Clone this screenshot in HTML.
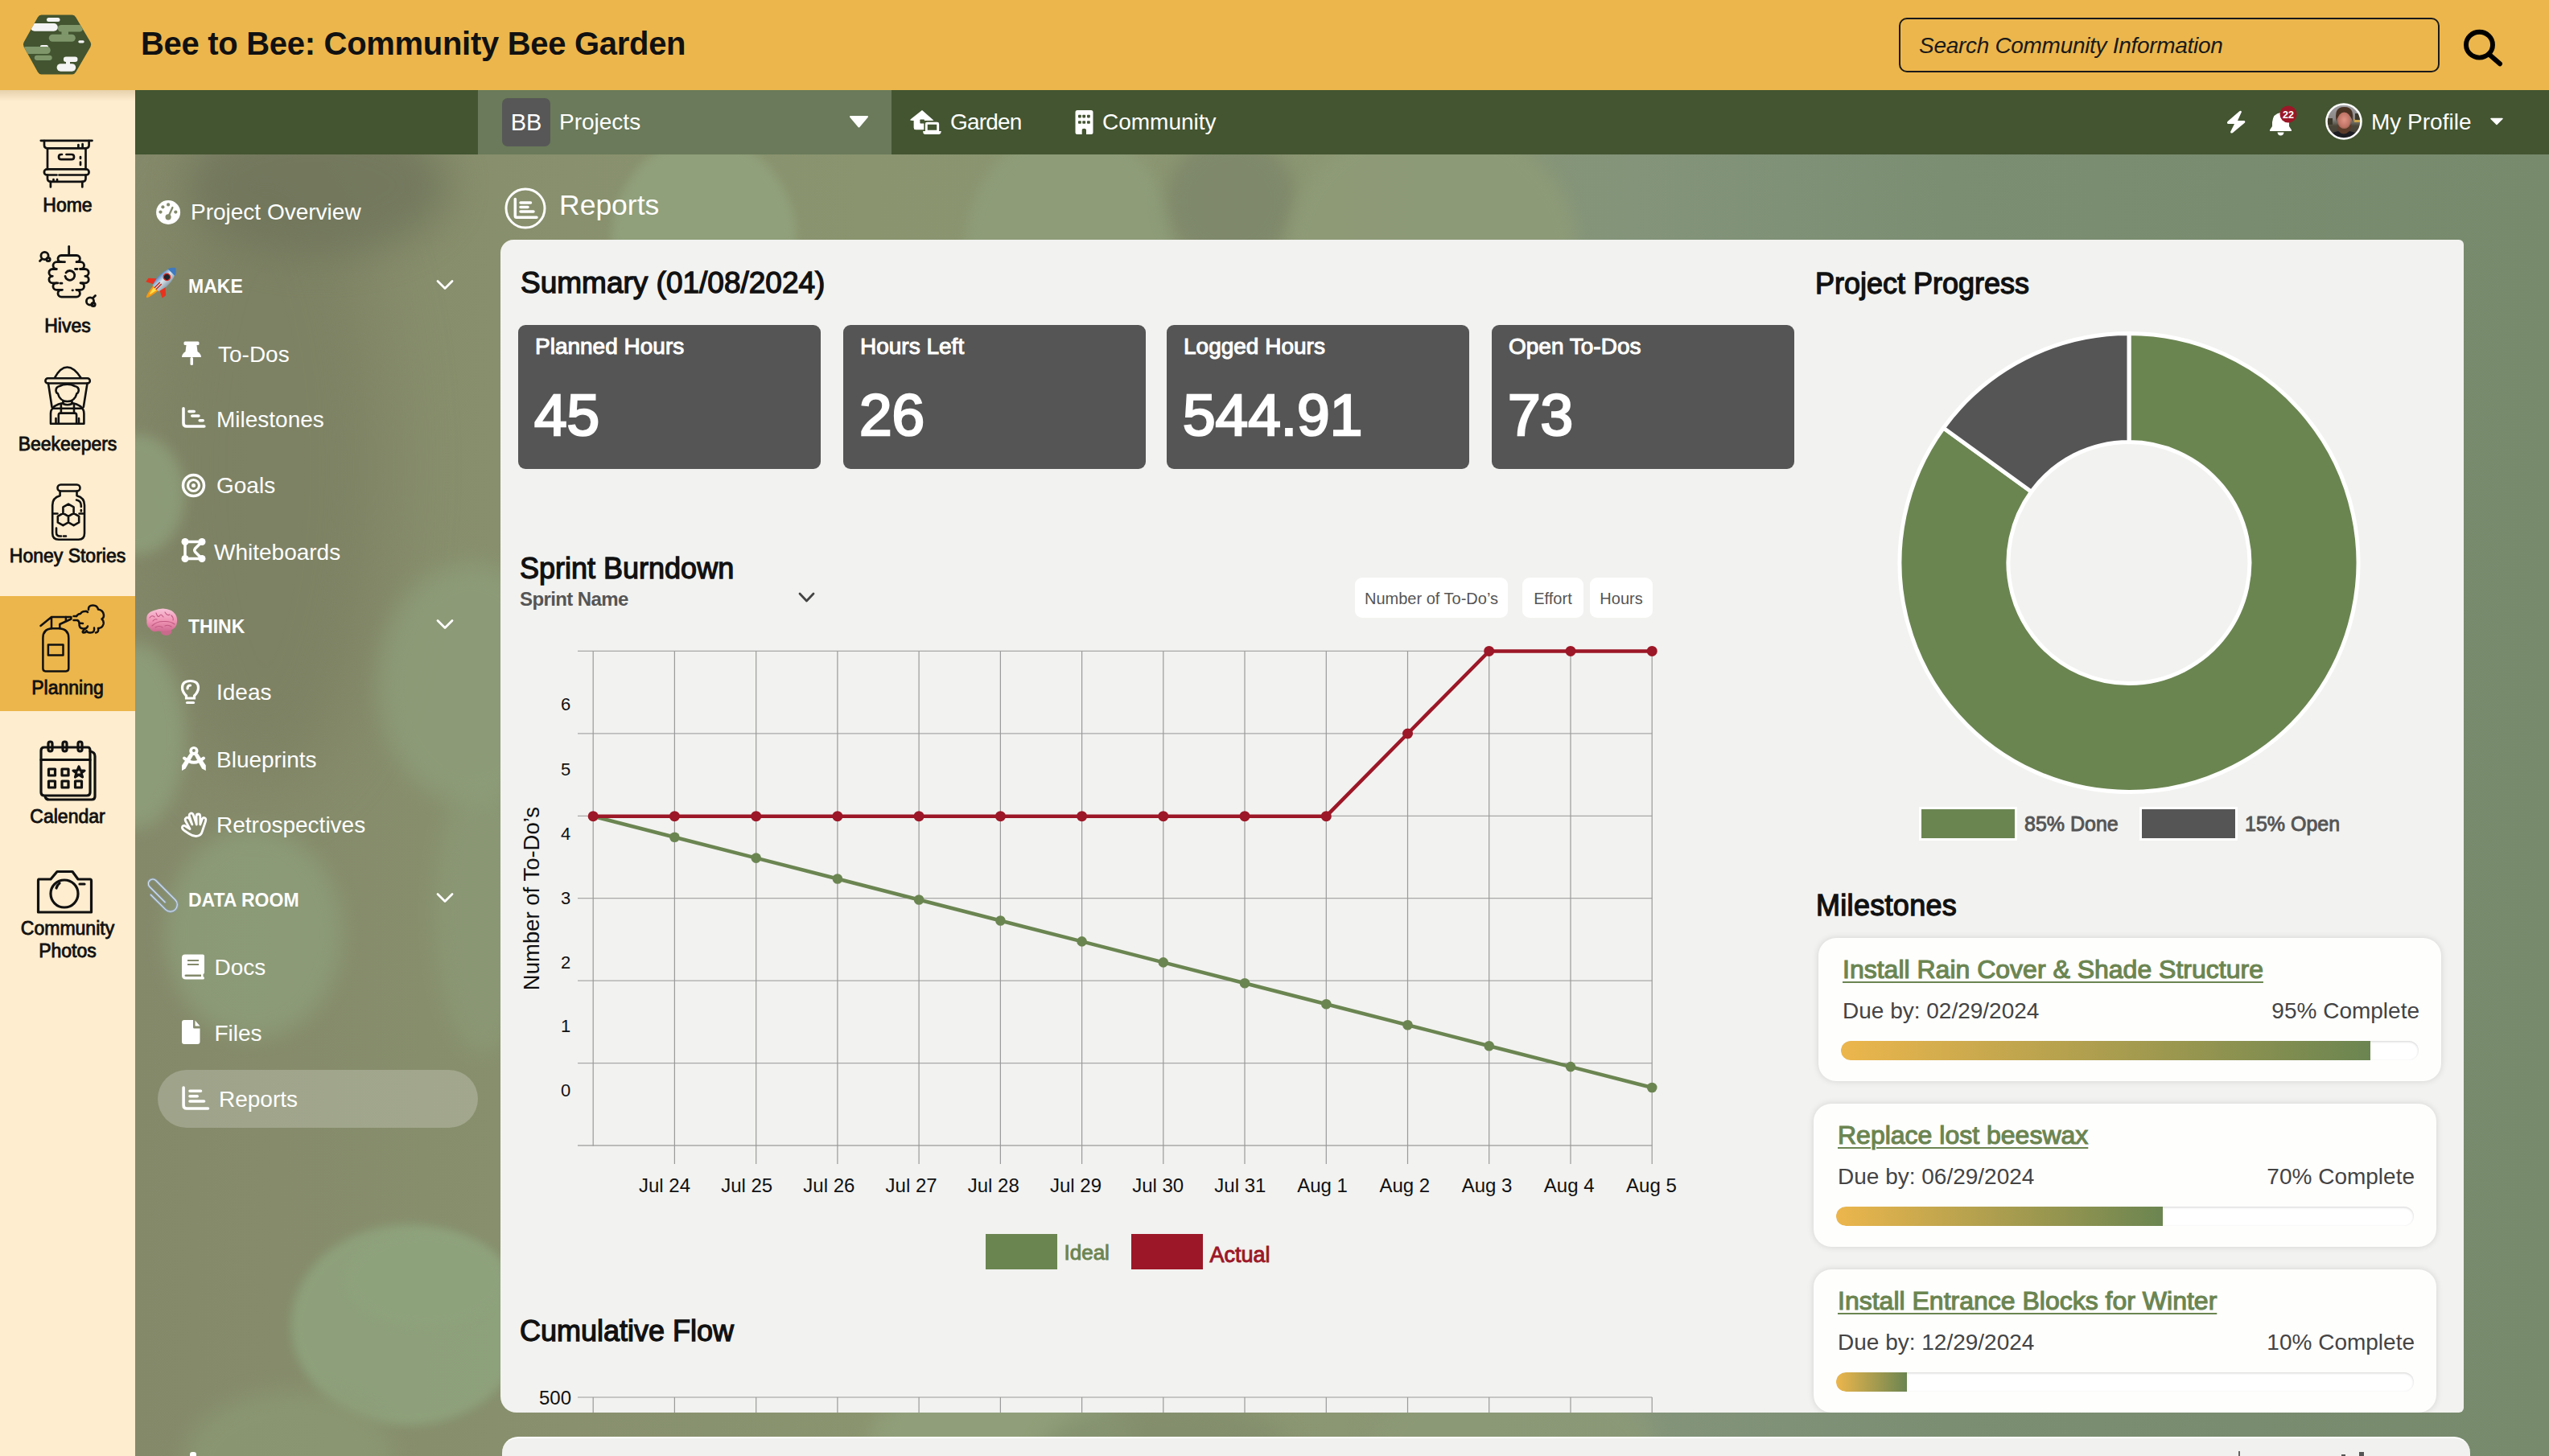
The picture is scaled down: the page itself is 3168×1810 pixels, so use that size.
<!DOCTYPE html><html><head><meta charset="utf-8"><style>
html,body{margin:0;padding:0;}
body{width:3168px;height:1810px;overflow:hidden;position:relative;font-family:"Liberation Sans",sans-serif;background:#7d8a68;}
.t{position:absolute;line-height:1;white-space:nowrap;}
.a{position:absolute;}
svg{position:absolute;overflow:visible;}
</style></head><body>

<div class="a" style="left:168px;top:192px;width:3000px;height:1618px;overflow:hidden;background:linear-gradient(90deg,#84896a 0%,#878e6c 12%,#8a946f 30%,#8b9672 50%,#83947a 62%,#7b8e72 75%,#778a6c 100%);"><div class="a" style="left:12px;top:-12px;width:300px;height:800px;border-radius:50%;background:#7b7f62;filter:blur(45px);opacity:0.75"></div><div class="a" style="left:62px;top:-52px;width:330px;height:180px;border-radius:50%;background:#70755b;filter:blur(25px);opacity:0.8"></div><div class="a" style="left:-58px;top:348px;width:120px;height:150px;border-radius:50%;background:#8fa07c;filter:blur(8px);opacity:0.8"></div><div class="a" style="left:-58px;top:608px;width:120px;height:230px;border-radius:50%;background:#8fa07c;filter:blur(10px);opacity:0.8"></div><div class="a" style="left:37px;top:838px;width:220px;height:260px;border-radius:50%;background:#8e9f7b;filter:blur(12px);opacity:0.75"></div><div class="a" style="left:302px;top:508px;width:230px;height:300px;border-radius:50%;background:#8fa07c;filter:blur(14px);opacity:0.7"></div><div class="a" style="left:372px;top:768px;width:120px;height:350px;border-radius:50%;background:#8d9d79;filter:blur(14px);opacity:0.6"></div><div class="a" style="left:194px;top:1330px;width:290px;height:250px;border-radius:50%;background:#8ea27c;filter:blur(6px);opacity:0.95"></div><div class="a" style="left:262px;top:1338px;width:200px;height:120px;border-radius:50%;background:#8ea27c;filter:blur(6px);opacity:0.9"></div><div class="a" style="left:62px;top:1538px;width:260px;height:160px;border-radius:50%;background:#8c9a74;filter:blur(14px);opacity:0.7"></div><div class="a" style="left:592px;top:-22px;width:230px;height:260px;border-radius:50%;background:#91a27c;filter:blur(6px);opacity:0.9"></div><div class="a" style="left:1032px;top:-32px;width:260px;height:300px;border-radius:50%;background:#8f9e7a;filter:blur(8px);opacity:0.85"></div><div class="a" style="left:1282px;top:-22px;width:160px;height:160px;border-radius:50%;background:#7b8469;filter:blur(12px);opacity:0.75"></div><div class="a" style="left:1432px;top:-42px;width:360px;height:320px;border-radius:50%;background:#8f9c78;filter:blur(10px);opacity:0.8"></div><div class="a" style="left:912px;top:1508px;width:330px;height:200px;border-radius:50%;background:#92a27c;filter:blur(14px);opacity:0.8"></div><div class="a" style="left:1122px;top:1548px;width:320px;height:150px;border-radius:50%;background:#7f8a6a;filter:blur(14px);opacity:0.6"></div><div class="a" style="left:1532px;top:1508px;width:360px;height:200px;border-radius:50%;background:#8e9b77;filter:blur(14px);opacity:0.7"></div></div>
<div class="a" style="left:236px;top:1805px;width:8px;height:10px;background:#fff;border-radius:3px 3px 0 0;"></div>
<div class="a" style="left:0;top:0;width:3168px;height:112px;background:#ecb64c;"></div>
<div class="a" style="left:0;top:112px;width:168px;height:1698px;background:#feedcf;"></div>
<div class="a" style="left:0;top:741px;width:168px;height:143px;background:#ecb64c;"></div>
<div class="a" style="left:0;top:112px;width:168px;height:14px;background:linear-gradient(rgba(150,110,50,0.22),rgba(150,110,50,0));"></div>
<div class="a" style="left:168px;top:112px;width:3000px;height:80px;background:#435531;"></div>
<div class="a" style="left:594px;top:112px;width:514px;height:80px;background:#6a7a5a;"></div>
<div class="a" style="left:622px;top:298px;width:2440px;height:1458px;background:#f2f2f0;border-radius:16px 6px 6px 20px;"></div>
<div class="a" style="left:624px;top:1786px;width:2446px;height:200px;background:#f1f2ef;border-radius:20px;border-top:2px solid #fff;"></div>
<svg style="left:0;top:0" width="140" height="112" viewBox="0 0 140 112"><path d="M51.5,18.4 L89.8,18.4 Q92.6,18.4 94.3,21.4 L112.5,52.5 Q114.2,55.4 112.5,58.3 L94.3,89.6 Q92.6,92.6 89.8,92.6 L51.5,92.6 Q48.6,92.6 46.9,89.6 L29.6,58.3 Q28,55.4 29.6,52.5 L46.9,21.4 Q48.6,18.4 51.5,18.4 Z" fill="#425430"/><clipPath id="hx"><path d="M51.5,18.4 L89.8,18.4 Q92.6,18.4 94.3,21.4 L112.5,52.5 Q114.2,55.4 112.5,58.3 L94.3,89.6 Q92.6,92.6 89.8,92.6 L51.5,92.6 Q48.6,92.6 46.9,89.6 L29.6,58.3 Q28,55.4 29.6,52.5 L46.9,21.4 Q48.6,18.4 51.5,18.4 Z"/></clipPath><g clip-path="url(#hx)"><rect x="58" y="22" width="16.5" height="5" rx="2.5" fill="#f4f4f4"/><rect x="38" y="29" width="33.8" height="9.799999999999997" rx="4.899999999999999" fill="#f4f4f4"/><rect x="71.8" y="31" width="31.200000000000003" height="8.600000000000001" rx="4.300000000000001" fill="#7e966a"/><rect x="76.5" y="39" width="8.5" height="4.5" fill="#7e966a"/><rect x="60.8" y="42.8" width="33.0" height="9.0" rx="4.5" fill="#7e966a"/><rect x="97.3" y="50.2" width="7.400000000000006" height="3.1999999999999957" rx="1.5999999999999979" fill="#f4f4f4"/><rect x="49.8" y="56" width="10.200000000000003" height="4.399999999999999" rx="2.1999999999999993" fill="#f4f4f4"/><rect x="28" y="58" width="34.8" height="9" rx="4.5" fill="#7e966a"/><rect x="42.8" y="68.7" width="21.900000000000006" height="6.299999999999997" rx="3.1499999999999986" fill="#7e966a"/><rect x="78.9" y="70.6" width="17.599999999999994" height="6.400000000000006" rx="3.200000000000003" fill="#f4f4f4"/><rect x="82" y="76.5" width="5" height="3.5" fill="#f4f4f4"/><rect x="70.6" y="79.2" width="23.60000000000001" height="9.5" rx="4.75" fill="#f4f4f4"/></g></svg>
<div class="t" style="left:175.0px;top:34.1px;font-size:40px;font-weight:bold;color:#111;letter-spacing:-0.3px;">Bee to Bee: Community Bee Garden</div>
<div class="a" style="left:2360px;top:22px;width:668px;height:64px;border:2.5px solid #1a1a1a;border-radius:10px;"></div>
<div class="t" style="left:2385.0px;top:42.8px;font-size:28px;font-weight:normal;color:#1a1a1a;letter-spacing:-0.3px;font-style:italic;">Search Community Information</div>
<svg style="left:3055px;top:32px" width="60" height="56" viewBox="3055 32 60 56"><ellipse cx="3081.5" cy="55.7" rx="16.5" ry="15.9" fill="none" stroke="#000" stroke-width="5.9"/><line x1="3093.5" y1="67.5" x2="3107" y2="79.3" stroke="#000" stroke-width="6" stroke-linecap="round"/></svg>
<svg style="left:40px;top:160px;" width="90" height="80" viewBox="40 160 90 80"><g fill="none" stroke="#111" stroke-width="2.7" stroke-linecap="round" stroke-linejoin="round"><path d="M50.8,174.8 H114.5"/><path d="M55,175 V180.5 Q55,184.3 59,184.3 H106.5 Q110.6,184.3 110.6,180.5 V175"/><path d="M97.4,180 V183 M102.6,179 V183"/><path d="M59,184.3 V210.3 M106.5,184.3 V210.3"/><path d="M77,192 H76 Q73,192 73,195 Q73,198.2 76,198.2 H89 Q92,198.2 92,195 Q92,192 89,192 H82.5"/><path d="M100,195 V197 M100,201.5 V205"/><path d="M58.5,210.3 H107 A3.6,3.6 0 0 1 107,217.5 H73.5 M70.5,217.5 H58.5 A3.6,3.6 0 0 1 58.5,210.3"/><path d="M59,217.5 V222 Q59,225.8 63,225.8 H102.5 Q106.5,225.8 106.5,222 V217.5"/><path d="M66.5,223 V225 M71,223 V225"/><path d="M62.9,225.8 V232.5 M102.3,225.8 V232.5"/></g></svg>
<svg style="left:40px;top:300px;" width="90" height="90" viewBox="40 300 90 90"><g fill="none" stroke="#111" stroke-width="2.8" stroke-linecap="round" stroke-linejoin="round"><path d="M85.7,306.5 V317.5"/><path d="M76.1,317.5 L95.3,317.5 A4.10,4.10 0 0 1 95.3,325.7 L100.2,325.7 A4.40,4.40 0 0 1 100.2,334.5 L105.8,334.5 A4.40,4.40 0 0 1 105.8,343.3 L106.0,343.3 A4.25,4.25 0 0 1 106.0,351.8 L100.3,351.8 A4.25,4.25 0 0 1 100.3,360.3 L95.0,360.3 A4.40,4.40 0 0 1 95.0,369.1 L76.4,369.1 A4.40,4.40 0 0 1 76.4,360.3 L70.2,360.3 A4.25,4.25 0 0 1 70.2,351.8 L65.2,351.8 A4.25,4.25 0 0 1 65.2,343.3 L65.3,343.3 A4.40,4.40 0 0 1 65.3,334.5 L70.4,334.5 A4.40,4.40 0 0 1 70.4,325.7 L76.1,325.7 A4.10,4.10 0 0 1 76.1,317.5 Z"/><path d="M81,343.3 A5.9,5.9 0 1 0 82,339" /><path d="M76,325.7 H80.5 M95,325.7 H97 M93.5,334.5 H96 M99.5,334.5 H104 M70,351.8 H72 M75,352.2 H77 M100,351.8 H103 M76,360.3 H77.5 M90,360.8 H90.5 M95,360.3 H97"/><circle cx="55.5" cy="318" r="4.6"/><circle cx="60" cy="322.5" r="2.2"/><path d="M49.5,324.5 L52,322"/><circle cx="112" cy="374.5" r="4.6"/><circle cx="116" cy="378.5" r="2.2"/><path d="M118.5,367.5 L116,370"/></g></svg>
<svg style="left:40px;top:440px;" width="90" height="100" viewBox="40 440 90 100"><g fill="none" stroke="#111" stroke-width="2.6" stroke-linecap="round" stroke-linejoin="round"><path d="M68,469.7 Q75,456.5 83.6,456.5 Q92,456.5 100.6,469.7"/><path d="M59.5,470.3 H108.7 A3.1,3.1 0 0 1 108.7,476.5 H59.5 A3.1,3.1 0 0 1 59.5,470.3 Z"/><path d="M60,476.5 L64.5,506 M108.5,476.5 L103.8,506"/><path d="M74,480 Q78,477.8 83.6,477.8 Q89,477.8 93,480 Q98,481 97.8,485.5 Q97,489 95.5,489 Q93,499 83.6,499 Q74.5,499 71.8,489 Q70,489 69.5,485.5 Q69.5,481 74,480 Z"/><path d="M78.4,499 V502 Q83.6,504.5 89.5,502 V499"/><path d="M63,526.8 V514 Q63,504 78.4,501 M89.5,501 Q104.4,504 104.4,514 V526.8 H63"/><path d="M65.5,507.7 H101.5"/><path d="M75.9,502 V513.6 M92,502 V513.6"/><path d="M72.8,526.8 V516 Q72.8,513.6 75,513.6 H93 Q95.1,513.6 95.1,516 V526.8"/><path d="M69.5,520 V526 M98,520 V526"/></g></svg>
<svg style="left:40px;top:590px;" width="90" height="100" viewBox="40 590 90 100"><g fill="none" stroke="#111" stroke-width="2.6" stroke-linecap="round" stroke-linejoin="round"><rect x="71.5" y="602.5" width="28" height="8" rx="4"/><path d="M74.6,610.5 V616.2 Q65.2,618.5 65.2,628 V663 Q65.2,670.7 73,670.7 H97.5 Q105,670.7 105,663 V628 Q105,618.5 95.5,616.2 V610.5"/><path d="M85.00,626.60 L91.58,630.40 L91.58,638.00 L85.00,641.80 L78.42,638.00 L78.42,630.40 Z M78.40,638.00 L84.98,641.80 L84.98,649.40 L78.40,653.20 L71.82,649.40 L71.82,641.80 Z M91.60,638.00 L98.18,641.80 L98.18,649.40 L91.60,653.20 L85.02,649.40 L85.02,641.80 Z"/><path d="M65.5,638.5 H71.5 M98.5,638.5 H104.5"/><path d="M95,621.5 Q100.8,622.5 100.8,628.5 V630 M100.8,634 V635.5"/><path d="M70,656.5 V662 Q70,666.5 74.5,666.5 H76 M79,666.5 H82"/></g></svg>
<svg style="left:40px;top:740px;" width="100" height="100" viewBox="40 740 100 100"><g fill="none" stroke="#111" stroke-width="2.5" stroke-linecap="round" stroke-linejoin="round"><path d="M64,781.2 H74.3 Q85.3,782 85.3,793 V831 Q85.3,834.4 82,834.4 H56.5 Q53.4,834.4 53.4,831 V793 Q53.4,782 64,781.2 Z"/><path d="M64,781.2 V767 M74.3,781.2 V776 L88.4,769.5 V767 H64 L50.5,778"/><path d="M81.9,767 V772"/><rect x="59.9" y="801.5" width="18.6" height="13"/><path d="M91.5,766 H95 M91.5,771 H95"/><path d="M95,766 Q97,763 100,763 Q102,759.5 106,760 Q108,759.5 109,761"/><path d="M110,758 Q109.5,752.5 115.5,752.5 Q121,752.5 122,757.5 Q128.5,758.5 129,765 Q129,768.5 126.5,769.5 Q129.5,772 128.5,776 Q127,781 122,781 Q123,786 119,786.5"/><path d="M117,780.5 Q118,786.5 112.5,786.5 Q109,787 107.5,784 Q107,786.5 104,786.5 Q100.5,786 106.5,781"/><path d="M96,771 Q98.5,772 98.5,775 Q98,781.5 103.5,781.5 Q108,782 109,778.5 M98.5,775 Q101,774.5 103,775"/></g></svg>
<svg style="left:40px;top:915px;" width="90" height="90" viewBox="40 915 90 90"><g fill="none" stroke="#111" stroke-width="3.2" stroke-linecap="round" stroke-linejoin="round"><path d="M55,929 H109 Q112,929 112,933 V985 Q112,989 108,989 H55 Q51,989 51,985 V933 Q51,929 55,929 Z"/><path d="M112,934 Q118,935 118,940 V990 Q118,994 114,994 H61 Q57,994 56,990"/><path d="M51,944.5 H112"/><rect x="60" y="922" width="5" height="12" rx="2.5"/><rect x="78" y="922" width="5" height="12" rx="2.5"/><rect x="97" y="922" width="5" height="12" rx="2.5"/><rect x="60.5" y="956" width="8" height="8"/><rect x="77" y="956" width="8" height="8"/><rect x="60.5" y="971" width="8" height="8"/><rect x="77" y="971" width="8" height="8"/><rect x="93.5" y="971" width="8" height="8"/><path d="M98,953 L100,958 H105 L101,961 L102.5,966 L98,963 L93.5,966 L95,961 L91,958 H96 Z"/></g></svg>
<svg style="left:40px;top:1075px;" width="90" height="70" viewBox="40 1075 90 70"><g fill="none" stroke="#111" stroke-width="3.2" stroke-linecap="round" stroke-linejoin="round"><path d="M48,1093 H63 L71,1083.5 H90 L97,1093 H112 Q113.5,1093 113.5,1095 V1134 H47.5 V1095 Q47.5,1093 48,1093 Z"/><circle cx="80" cy="1111" r="17"/><path d="M70,1104 Q71,1100 74,1098"/><path d="M99,1099 H105"/></g></svg>
<div class="t" style="left:-416.0px;width:1000px;text-align:center;top:244.2px;font-size:23px;font-weight:normal;color:#111;-webkit-text-stroke:0.83px #111;">Home</div>
<div class="t" style="left:-416.0px;width:1000px;text-align:center;top:393.9px;font-size:23px;font-weight:normal;color:#111;-webkit-text-stroke:0.83px #111;">Hives</div>
<div class="t" style="left:-416.0px;width:1000px;text-align:center;top:540.9px;font-size:23px;font-weight:normal;color:#111;-webkit-text-stroke:0.83px #111;">Beekeepers</div>
<div class="t" style="left:-416.0px;width:1000px;text-align:center;top:680.2px;font-size:23px;font-weight:normal;color:#111;-webkit-text-stroke:0.83px #111;">Honey Stories</div>
<div class="t" style="left:-416.0px;width:1000px;text-align:center;top:843.8px;font-size:23px;font-weight:normal;color:#111;-webkit-text-stroke:0.83px #111;">Planning</div>
<div class="t" style="left:-416.0px;width:1000px;text-align:center;top:1004.0px;font-size:23px;font-weight:normal;color:#111;-webkit-text-stroke:0.83px #111;">Calendar</div>
<div class="t" style="left:-416.0px;width:1000px;text-align:center;top:1142.5px;font-size:23px;font-weight:normal;color:#111;-webkit-text-stroke:0.83px #111;">Community</div>
<div class="t" style="left:-416.0px;width:1000px;text-align:center;top:1170.5px;font-size:23px;font-weight:normal;color:#111;-webkit-text-stroke:0.83px #111;">Photos</div>
<div class="a" style="left:624px;top:122px;width:60px;height:60px;background:#575757;border-radius:7px;"></div>
<div class="t" style="left:154.0px;width:1000px;text-align:center;top:137.5px;font-size:29px;font-weight:normal;color:#fff;">BB</div>
<div class="t" style="left:695.0px;top:138.3px;font-size:28px;font-weight:normal;color:#fff;">Projects</div>
<svg style="left:1050px;top:140px" width="36" height="24" viewBox="1050 140 36 24"><path d="M1057,145 H1078 L1067.5,157.5 Z" fill="#fff" stroke="#fff" stroke-width="2" stroke-linejoin="round"/></svg>
<svg style="left:1125px;top:130px" width="50" height="45" viewBox="1125 130 50 45"><path d="M1146,137 L1160.5,149.7 H1135.8 V159 Q1135.8,161.1 1138,161.1 H1148.2 V149.7 L1131.5,149.7 Q1131,148.8 1132,148 Z" fill="#fff"/><path d="M1133,149.7 L1146,137.5 L1159.8,149.7 Z M1135.8,149.7 V159 Q1135.8,161.2 1138,161.2 H1148.5 V149.7 Z" fill="#fff"/><rect x="1143.4" y="148.4" width="5.5" height="5.1" rx="0.8" fill="#435531"/><rect x="1148.4" y="150.3" width="20.2" height="14" fill="#435531"/><rect x="1151.3" y="153.2" width="14.4" height="10" rx="1" fill="none" stroke="#fff" stroke-width="2.9"/><path d="M1147.1,163.1 H1169.8 L1169.2,165.5 Q1168.6,166.9 1167,166.9 H1149.6 Q1148,166.9 1147.5,165.5 Z" fill="#fff"/></svg>
<div class="t" style="left:1181.0px;top:138.3px;font-size:28px;font-weight:normal;color:#fff;letter-spacing:-0.8px;">Garden</div>
<svg style="left:1330px;top:130px" width="35" height="45" viewBox="1330 130 35 45"><path d="M1339,137 H1356 Q1358.5,137 1358.5,139.5 V164.5 Q1358.5,167 1356,167 H1350 V161.5 Q1350,159.7 1347.3,159.7 Q1344.7,159.7 1344.7,161.5 V167 H1339 Q1336.5,167 1336.5,164.5 V139.5 Q1336.5,137 1339,137 Z" fill="#fff"/><g fill="#435531"><rect x="1340" y="142.8" width="3.8" height="3.6" rx="0.8"/><rect x="1345.3" y="142.8" width="3.8" height="3.6" rx="0.8"/><rect x="1351" y="142.8" width="3.8" height="3.6" rx="0.8"/><rect x="1340" y="150.2" width="3.8" height="3.6" rx="0.8"/><rect x="1345.3" y="150.2" width="3.8" height="3.6" rx="0.8"/><rect x="1351" y="150.2" width="3.8" height="3.6" rx="0.8"/></g></svg>
<div class="t" style="left:1370.0px;top:138.3px;font-size:28px;font-weight:normal;color:#fff;">Community</div>
<svg style="left:2760px;top:132px" width="40" height="40" viewBox="2760 132 40 40"><path d="M2783,138.5 Q2785,137 2786,139 L2781,150 H2789 Q2791,150.5 2790,152.5 L2775,165 Q2772.5,166.5 2772,164 L2777,154 H2769.5 Q2767,153.5 2768.5,151 Z" fill="#fff"/></svg>
<svg style="left:2815px;top:128px" width="50" height="45" viewBox="2815 128 50 45"><path d="M2834.5,140 Q2844,141 2845,152 V157 L2848,161.5 Q2848.5,163 2847,163 H2822 Q2820.5,163 2821,161.5 L2824,157 V152 Q2825,141 2834.5,140 Z" fill="#fff"/><path d="M2830.5,164.5 H2838.5 Q2838,168.5 2834.5,168.5 Q2831,168.5 2830.5,164.5 Z" fill="#fff"/><circle cx="2844" cy="142" r="10.5" fill="#9c1727"/><text x="2844" y="146.5" font-family="Liberation Sans" font-weight="bold" font-size="12.5" fill="#fff" text-anchor="middle">22</text></svg>
<svg style="left:2885px;top:123px" width="56" height="56" viewBox="2885 123 56 56"><defs><clipPath id="av"><circle cx="2913" cy="151" r="21"/></clipPath><linearGradient id="sky" x1="0" y1="0" x2="0" y2="1"><stop offset="0" stop-color="#a9a8ae"/><stop offset="0.45" stop-color="#8a8784"/><stop offset="0.6" stop-color="#4a4638"/><stop offset="1" stop-color="#3e3a3a"/></linearGradient><radialGradient id="fg" cx="0.5" cy="0.45" r="0.6"><stop offset="0" stop-color="#e39585"/><stop offset="0.7" stop-color="#c07465"/><stop offset="1" stop-color="#8a5848"/></radialGradient></defs><filter id="avb"><feGaussianBlur stdDeviation="0.6"/></filter><g clip-path="url(#av)" filter="url(#avb)"><rect x="2885" y="123" width="56" height="56" fill="url(#sky)"/><rect x="2926" y="148" width="16" height="4" fill="#c9a24a"/><path d="M2904,152 Q2900,133 2913,133 Q2927,132 2923.5,152 Q2923,142 2913.5,142 Q2904.5,142 2904,152 Z" fill="#4a3224"/><rect x="2885" y="147" width="14" height="8" fill="#3a382c"/><rect x="2927" y="141" width="14" height="8" fill="#3a382c"/><ellipse cx="2913.5" cy="150" rx="8.3" ry="10.5" fill="url(#fg)"/><path d="M2904.5,154 Q2906,168 2913.5,168 Q2921,168 2922.5,154 Q2919,160 2913.5,160 Q2908,160 2904.5,154 Z" fill="#5c3b2a"/><path d="M2890,180 Q2893,165 2906,163 Q2913,170 2920,163 Q2934,165 2937,180 Z" fill="#1c1d24"/></g><circle cx="2913" cy="151" r="21.5" fill="none" stroke="#fff" stroke-width="2.6"/></svg>
<div class="t" style="left:2947.0px;top:138.0px;font-size:28px;font-weight:normal;color:#fff;">My Profile</div>
<svg style="left:3090px;top:140px" width="26" height="20" viewBox="3090 140 26 20"><path d="M3096,147.5 H3110 L3103,154.5 Z" fill="#fff" stroke="#fff" stroke-width="1.5" stroke-linejoin="round"/></svg>
<div class="a" style="left:196px;top:1330px;width:398px;height:72px;border-radius:36px;background:rgba(255,255,255,0.22);"></div>
<svg style="left:168px;top:230px" width="520" height="1180" viewBox="168 230 520 1180"><circle cx="209.1" cy="264" r="15" fill="#fff"/><g fill="#838a6b"><circle cx="202.4" cy="257.3" r="2.1"/><circle cx="209.1" cy="254.4" r="2.1"/><circle cx="199.5" cy="263.6" r="2.1"/><circle cx="218.3" cy="263.6" r="2.1"/><circle cx="209.1" cy="269.8" r="3.6"/></g><path d="M209.1,269.8 L214.4,258" stroke="#838a6b" stroke-width="2.4" stroke-linecap="round"/><defs><linearGradient id="rk" x1="0" x2="1"><stop offset="0" stop-color="#4f86c6"/><stop offset="0.45" stop-color="#dfe6ea"/><stop offset="1" stop-color="#8aa0b0"/></linearGradient></defs><g transform="translate(202.3,349.5) rotate(45) scale(0.9)"><path d="M-8,3 L-17,11 L-16,17 L-6,12 Z M8,3 L17,11 L16,17 L6,12 Z" fill="#e8321e"/><path d="M-5,13 Q-3,30 0,32 Q3,30 5,13 Z" fill="#f59a14"/><path d="M-3,13 Q-1,24 0,26 Q1,24 3,13 Z" fill="#ffe04a"/><path d="M0,-26 Q10,-16 9,2 L6,14 H-6 L-9,2 Q-10,-16 0,-26 Z" fill="url(#rk)"/><path d="M0,-26 Q5,-22 7,-17 H-7 Q-5,-22 0,-26 Z" fill="#3f79c0"/><circle cx="0" cy="-8" r="4.6" fill="#1b2630" stroke="#d8251c" stroke-width="1.6"/><path d="M-1.5,4 V15 M1.5,4 V15" stroke="#c0281c" stroke-width="1.6"/></g><path d="M230,424.5 H246 Q247.5,424.5 247.5,426 V427.5 Q247.5,429 246,429 H244.5 L245.5,437 Q250,440 250,444 H226 Q226,440 230.5,437 L231.5,429 H230 Q228.5,429 228.5,427.5 V426 Q228.5,424.5 230,424.5 Z" fill="#fff"/><rect x="236.5" y="444" width="3.5" height="10" rx="1.5" fill="#fff"/><g stroke="#fff" stroke-width="3.6" fill="none" stroke-linecap="round" stroke-linejoin="round"><path d="M228,507.8 V526 Q228,530 232,530 H253.8"/><path d="M235,511.5 H241.2 M238.8,517 H246.9 M248.2,522.8 H252.2"/></g><circle cx="240.5" cy="603.5" r="13" fill="none" stroke="#fff" stroke-width="3.5"/><circle cx="240.5" cy="603.5" r="7" fill="none" stroke="#fff" stroke-width="3.2"/><circle cx="240.5" cy="603.5" r="2.5" fill="#fff"/><g stroke="#fff" stroke-width="3.5" fill="none"><path d="M230,673.5 H251 M230,694.5 H251 M230,673.5 V694.5 M251,673.5 L242.5,682 Q241,684 242.5,686 L251,694.5"/></g><g fill="#fff"><circle cx="230" cy="673.5" r="4.5"/><circle cx="251" cy="673.5" r="4.5"/><circle cx="230" cy="694.5" r="4.5"/><circle cx="251" cy="694.5" r="4.5"/></g><defs><linearGradient id="brg" x1="0" y1="0" x2="0" y2="1"><stop offset="0" stop-color="#f8c3d8"/><stop offset="0.55" stop-color="#ef93b3"/><stop offset="1" stop-color="#cf6990"/></linearGradient></defs><ellipse cx="206.5" cy="785" rx="6.8" ry="5" fill="#c96a8c"/><path d="M182.5,772 Q180.5,762 191,759 Q203,754 213,759 Q221,764 220,773 Q219.5,781 212,783.5 Q204,785.5 196,784.5 Q190,787 186.5,781.5 Q181.5,778 182.5,772 Z" fill="url(#brg)"/><g stroke="#c25a82" stroke-width="1.1" fill="none" stroke-linecap="round"><path d="M189,778 Q195,772 204,772.5 Q212,772 217,776"/><path d="M186,768 Q189,764 192,767 M194,762 Q196,768 198,766 Q200,762 203,767 M205,761 Q208,766 211,764 M213,765 Q216,768 215,771 M190,772 Q192,769 195,770"/><path d="M193,780 Q198,777 202,780 M205,778 Q209,776 213,779"/></g><g stroke="#fff" stroke-width="3.2" fill="none" stroke-linecap="round"><path d="M231.5,865 Q226.5,860 226.5,855 Q226.5,846.5 236.5,846.5 Q246.5,846.5 246.5,855 Q246.5,860 241.5,865 V868 H231.5 Z"/><path d="M232.5,873.5 H240.5"/><path d="M233,856 Q233,852 236.5,852"/></g><circle cx="240.9" cy="933.5" r="5.6" fill="#fff"/><circle cx="240.9" cy="933" r="1.9" fill="#838a6b"/><path d="M236,936.5 L240,939 L230.5,955.5 L226,958 L226,951.5 Z" fill="#fff"/><path d="M245.8,936.5 L241.8,939 L251,955.5 L255.8,958 L255.8,951.5 Z" fill="#fff"/><path d="M229,942.5 Q240.9,953 253,942.5" stroke="#fff" stroke-width="4" fill="none" stroke-linecap="round"/><path d="M231.5,946 Q240.9,951.5 250.5,946" stroke="#838a6b" stroke-width="1.2" fill="none" opacity="0"/><path d="M236,1030.5 L229.5,1026.5 Q226,1026 226.5,1029.5 Q227,1031 229,1032.5 L235,1036.5 Q239.5,1039.5 243.5,1039.5 Q250,1039.5 251.5,1033 L255.5,1021 Q256.5,1017 254,1016.5 Q252,1016 251,1019 L248.8,1025 L248.8,1015 Q248.8,1012 246.5,1012 Q244,1012 244,1015 L244.3,1025 L240.5,1013.5 Q239.5,1010.5 237,1011 Q234.5,1012 235.5,1015 L238.8,1025 L235.5,1018 Q234,1015.5 231.5,1016.5 Q229.5,1018 230.5,1020.5 L236,1030.5 Z" stroke="#fff" stroke-width="2.8" fill="none" stroke-linejoin="round" stroke-linecap="round"/><g transform="translate(200.5,1112) rotate(-45)" fill="none" stroke-linecap="round"><path d="M-3.5,10 V-17 A5.5,5.5 0 0 1 7.5,-17 V17 A8.5,8.5 0 0 1 -9.5,17 V-9" stroke="#8fa3b8" stroke-width="3"/><path d="M-3.5,10 V-17 A5.5,5.5 0 0 1 7.5,-17 V17 A8.5,8.5 0 0 1 -9.5,17 V-9" stroke="#dce6ef" stroke-width="1"/></g><path d="M230,1186.5 H252 Q254,1186.5 254,1188.5 V1209 Q254,1210.5 252.5,1211 V1214 Q254,1214.5 254,1216 Q254,1217.5 252,1217.5 H231 Q226,1217.5 226,1212.5 V1190.5 Q226,1186.5 230,1186.5 Z" fill="#fff"/><path d="M231,1211.5 H250 V1214 H231 Q229.5,1214 229.5,1212.7 Q229.5,1211.5 231,1211.5 Z" fill="#838a6b"/><path d="M233,1194 H247 M233,1199 H247" stroke="#838a6b" stroke-width="2.2"/><path d="M229,1268 H240 V1277 Q240,1278.5 241.5,1278.5 H248.5 V1295 Q248.5,1298 245.5,1298 H229 Q226,1298 226,1295 V1271 Q226,1268 229,1268 Z M242.5,1268.5 L248.5,1275.5 H242.5 Z" fill="#fff"/><g stroke="#fff" stroke-width="3.6" fill="none" stroke-linecap="round"><path d="M228.1,1352 V1374 Q228.1,1378 232,1378 H258.5"/><path d="M236,1356.3 H249.5 M236,1362.7 H245.2 M236,1369 H253.5"/></g><path d="M544,349.5 L553,358.5 L562,349.5" stroke="#fff" stroke-width="2.8" fill="none" stroke-linecap="round" stroke-linejoin="round"/><path d="M544,771.5 L553,780.5 L562,771.5" stroke="#fff" stroke-width="2.8" fill="none" stroke-linecap="round" stroke-linejoin="round"/><path d="M544,1111.5 L553,1120.5 L562,1111.5" stroke="#fff" stroke-width="2.8" fill="none" stroke-linecap="round" stroke-linejoin="round"/><circle cx="653" cy="259" r="24" fill="none" stroke="#fff" stroke-width="3"/><g stroke="#fff" stroke-width="3.5" fill="none" stroke-linecap="round"><path d="M640.3,247.5 V268.5 Q640.3,270.3 642,270.3 H667"/><path d="M647,251.9 H659.5 M647,257.4 H656 M647,263 H663"/></g></svg>
<div class="t" style="left:237.0px;top:250.1px;font-size:28px;font-weight:normal;color:#fff;">Project Overview</div>
<div class="t" style="left:271.0px;top:426.8px;font-size:28px;font-weight:normal;color:#fff;">To-Dos</div>
<div class="t" style="left:269.0px;top:508.3px;font-size:28px;font-weight:normal;color:#fff;">Milestones</div>
<div class="t" style="left:269.0px;top:590.0px;font-size:28px;font-weight:normal;color:#fff;">Goals</div>
<div class="t" style="left:266.0px;top:672.5px;font-size:28px;font-weight:normal;color:#fff;">Whiteboards</div>
<div class="t" style="left:269.0px;top:846.6px;font-size:28px;font-weight:normal;color:#fff;">Ideas</div>
<div class="t" style="left:269.0px;top:931.3px;font-size:28px;font-weight:normal;color:#fff;">Blueprints</div>
<div class="t" style="left:269.0px;top:1012.3px;font-size:28px;font-weight:normal;color:#fff;">Retrospectives</div>
<div class="t" style="left:266.5px;top:1189.3px;font-size:28px;font-weight:normal;color:#fff;">Docs</div>
<div class="t" style="left:266.5px;top:1270.8px;font-size:28px;font-weight:normal;color:#fff;">Files</div>
<div class="t" style="left:272.0px;top:1352.8px;font-size:28px;font-weight:normal;color:#fff;">Reports</div>
<div class="t" style="left:234.0px;top:345.1px;font-size:23px;font-weight:bold;color:#fff;">MAKE</div>
<div class="t" style="left:234.0px;top:767.8px;font-size:23px;font-weight:bold;color:#fff;">THINK</div>
<div class="t" style="left:234.0px;top:1107.9px;font-size:23px;font-weight:bold;color:#fff;">DATA ROOM</div>
<div class="t" style="left:695.0px;top:237.7px;font-size:35.5px;font-weight:normal;color:#fff;">Reports</div>
<div class="t" style="left:647.0px;top:333.4px;font-size:37px;font-weight:normal;color:#111;-webkit-text-stroke:1.33px #111;">Summary (01/08/2024)</div>
<div class="a" style="left:644px;top:404px;width:376px;height:179px;background:#555;border-radius:9px;"></div>
<div class="t" style="left:665.0px;top:416.8px;font-size:28px;font-weight:normal;color:#fff;-webkit-text-stroke:1.01px #fff;">Planned Hours</div>
<div class="t" style="left:664.0px;top:479.2px;font-size:73px;font-weight:normal;color:#fff;-webkit-text-stroke:2.63px #fff;">45</div>
<div class="a" style="left:1048px;top:404px;width:376px;height:179px;background:#555;border-radius:9px;"></div>
<div class="t" style="left:1069.0px;top:416.8px;font-size:28px;font-weight:normal;color:#fff;-webkit-text-stroke:1.01px #fff;">Hours Left</div>
<div class="t" style="left:1068.0px;top:479.2px;font-size:73px;font-weight:normal;color:#fff;-webkit-text-stroke:2.63px #fff;">26</div>
<div class="a" style="left:1450px;top:404px;width:376px;height:179px;background:#555;border-radius:9px;"></div>
<div class="t" style="left:1471.0px;top:416.8px;font-size:28px;font-weight:normal;color:#fff;-webkit-text-stroke:1.01px #fff;">Logged Hours</div>
<div class="t" style="left:1470.0px;top:479.2px;font-size:73px;font-weight:normal;color:#fff;-webkit-text-stroke:2.63px #fff;">544.91</div>
<div class="a" style="left:1854px;top:404px;width:376px;height:179px;background:#555;border-radius:9px;"></div>
<div class="t" style="left:1875.0px;top:416.8px;font-size:28px;font-weight:normal;color:#fff;-webkit-text-stroke:1.01px #fff;">Open To-Dos</div>
<div class="t" style="left:1874.0px;top:479.2px;font-size:73px;font-weight:normal;color:#fff;-webkit-text-stroke:2.63px #fff;">73</div>
<div class="t" style="left:646.0px;top:689.3px;font-size:36px;font-weight:normal;color:#111;-webkit-text-stroke:1.30px #111;">Sprint Burndown</div>
<div class="t" style="left:646.0px;top:732.7px;font-size:24px;font-weight:bold;color:#555;letter-spacing:-0.6px;">Sprint Name</div>
<svg style="left:985px;top:730px" width="35" height="25" viewBox="985 730 35 25"><path d="M994,738 L1002.5,747 L1011,738" stroke="#444" stroke-width="2.8" fill="none" stroke-linecap="round" stroke-linejoin="round"/></svg>
<div class="a" style="left:1684px;top:718px;width:190px;height:50px;background:#fff;border-radius:9px;"></div>
<div class="t" style="left:1279.0px;width:1000px;text-align:center;top:733.6px;font-size:20px;font-weight:normal;color:#555;">Number of To-Do’s</div>
<div class="a" style="left:1892px;top:718px;width:76px;height:50px;background:#fff;border-radius:9px;"></div>
<div class="t" style="left:1430.0px;width:1000px;text-align:center;top:733.6px;font-size:20px;font-weight:normal;color:#555;">Effort</div>
<div class="a" style="left:1976px;top:718px;width:78px;height:50px;background:#fff;border-radius:9px;"></div>
<div class="t" style="left:1515.0px;width:1000px;text-align:center;top:733.6px;font-size:20px;font-weight:normal;color:#555;">Hours</div>
<svg style="left:600px;top:780px" width="1500" height="980" viewBox="600 780 1500 980"><line x1="718" y1="809.4" x2="2053.2" y2="809.4" stroke="#a8a8a8" stroke-width="1.3"/><line x1="718" y1="911.8" x2="2053.2" y2="911.8" stroke="#a8a8a8" stroke-width="1.3"/><line x1="718" y1="1014.3" x2="2053.2" y2="1014.3" stroke="#a8a8a8" stroke-width="1.3"/><line x1="718" y1="1116.7" x2="2053.2" y2="1116.7" stroke="#a8a8a8" stroke-width="1.3"/><line x1="718" y1="1219.1" x2="2053.2" y2="1219.1" stroke="#a8a8a8" stroke-width="1.3"/><line x1="718" y1="1321.6" x2="2053.2" y2="1321.6" stroke="#a8a8a8" stroke-width="1.3"/><line x1="718" y1="1424.0" x2="2053.2" y2="1424.0" stroke="#a8a8a8" stroke-width="1.3"/><line x1="737.2" y1="809.4" x2="737.2" y2="1424.4" stroke="#9a9a9a" stroke-width="1.2"/><line x1="838.4" y1="809.4" x2="838.4" y2="1447" stroke="#9a9a9a" stroke-width="1.2"/><line x1="939.7" y1="809.4" x2="939.7" y2="1447" stroke="#9a9a9a" stroke-width="1.2"/><line x1="1040.9" y1="809.4" x2="1040.9" y2="1447" stroke="#9a9a9a" stroke-width="1.2"/><line x1="1142.1" y1="809.4" x2="1142.1" y2="1447" stroke="#9a9a9a" stroke-width="1.2"/><line x1="1243.4" y1="809.4" x2="1243.4" y2="1447" stroke="#9a9a9a" stroke-width="1.2"/><line x1="1344.6" y1="809.4" x2="1344.6" y2="1447" stroke="#9a9a9a" stroke-width="1.2"/><line x1="1445.8" y1="809.4" x2="1445.8" y2="1447" stroke="#9a9a9a" stroke-width="1.2"/><line x1="1547.0" y1="809.4" x2="1547.0" y2="1447" stroke="#9a9a9a" stroke-width="1.2"/><line x1="1648.3" y1="809.4" x2="1648.3" y2="1447" stroke="#9a9a9a" stroke-width="1.2"/><line x1="1749.5" y1="809.4" x2="1749.5" y2="1447" stroke="#9a9a9a" stroke-width="1.2"/><line x1="1850.7" y1="809.4" x2="1850.7" y2="1447" stroke="#9a9a9a" stroke-width="1.2"/><line x1="1952.0" y1="809.4" x2="1952.0" y2="1447" stroke="#9a9a9a" stroke-width="1.2"/><line x1="2053.2" y1="809.4" x2="2053.2" y2="1447" stroke="#9a9a9a" stroke-width="1.2"/><polyline points="737.2,1014.7 838.4,1040.7 939.7,1066.6 1040.9,1092.5 1142.1,1118.5 1243.4,1144.5 1344.6,1170.4 1445.8,1196.4 1547.0,1222.3 1648.3,1248.2 1749.5,1274.2 1850.7,1300.2 1952.0,1326.1 2053.2,1352.0" fill="none" stroke="#6b8551" stroke-width="4.5"/><circle cx="838.4" cy="1040.7" r="6.3" fill="#6b8551"/><circle cx="939.7" cy="1066.6" r="6.3" fill="#6b8551"/><circle cx="1040.9" cy="1092.5" r="6.3" fill="#6b8551"/><circle cx="1142.1" cy="1118.5" r="6.3" fill="#6b8551"/><circle cx="1243.4" cy="1144.5" r="6.3" fill="#6b8551"/><circle cx="1344.6" cy="1170.4" r="6.3" fill="#6b8551"/><circle cx="1445.8" cy="1196.4" r="6.3" fill="#6b8551"/><circle cx="1547.0" cy="1222.3" r="6.3" fill="#6b8551"/><circle cx="1648.3" cy="1248.2" r="6.3" fill="#6b8551"/><circle cx="1749.5" cy="1274.2" r="6.3" fill="#6b8551"/><circle cx="1850.7" cy="1300.2" r="6.3" fill="#6b8551"/><circle cx="1952.0" cy="1326.1" r="6.3" fill="#6b8551"/><circle cx="2053.2" cy="1352.0" r="6.3" fill="#6b8551"/><polyline points="737.2,1014.7 838.4,1014.7 939.7,1014.7 1040.9,1014.7 1142.1,1014.7 1243.4,1014.7 1344.6,1014.7 1445.8,1014.7 1547.0,1014.7 1648.3,1014.7 1749.5,912.0 1850.7,809.4 1952.0,809.4 2053.2,809.4" fill="none" stroke="#9c1727" stroke-width="4.5"/><circle cx="737.2" cy="1014.7" r="6.5" fill="#9c1727"/><circle cx="838.4" cy="1014.7" r="6.5" fill="#9c1727"/><circle cx="939.7" cy="1014.7" r="6.5" fill="#9c1727"/><circle cx="1040.9" cy="1014.7" r="6.5" fill="#9c1727"/><circle cx="1142.1" cy="1014.7" r="6.5" fill="#9c1727"/><circle cx="1243.4" cy="1014.7" r="6.5" fill="#9c1727"/><circle cx="1344.6" cy="1014.7" r="6.5" fill="#9c1727"/><circle cx="1445.8" cy="1014.7" r="6.5" fill="#9c1727"/><circle cx="1547.0" cy="1014.7" r="6.5" fill="#9c1727"/><circle cx="1648.3" cy="1014.7" r="6.5" fill="#9c1727"/><circle cx="1749.5" cy="912.0" r="6.5" fill="#9c1727"/><circle cx="1850.7" cy="809.4" r="6.5" fill="#9c1727"/><circle cx="1952.0" cy="809.4" r="6.5" fill="#9c1727"/><circle cx="2053.2" cy="809.4" r="6.5" fill="#9c1727"/><line x1="718" y1="1737" x2="2053.2" y2="1737" stroke="#9a9a9a" stroke-width="1.2"/><line x1="737.2" y1="1737" x2="737.2" y2="1756" stroke="#9a9a9a" stroke-width="1.2"/><line x1="838.4" y1="1737" x2="838.4" y2="1756" stroke="#9a9a9a" stroke-width="1.2"/><line x1="939.7" y1="1737" x2="939.7" y2="1756" stroke="#9a9a9a" stroke-width="1.2"/><line x1="1040.9" y1="1737" x2="1040.9" y2="1756" stroke="#9a9a9a" stroke-width="1.2"/><line x1="1142.1" y1="1737" x2="1142.1" y2="1756" stroke="#9a9a9a" stroke-width="1.2"/><line x1="1243.4" y1="1737" x2="1243.4" y2="1756" stroke="#9a9a9a" stroke-width="1.2"/><line x1="1344.6" y1="1737" x2="1344.6" y2="1756" stroke="#9a9a9a" stroke-width="1.2"/><line x1="1445.8" y1="1737" x2="1445.8" y2="1756" stroke="#9a9a9a" stroke-width="1.2"/><line x1="1547.0" y1="1737" x2="1547.0" y2="1756" stroke="#9a9a9a" stroke-width="1.2"/><line x1="1648.3" y1="1737" x2="1648.3" y2="1756" stroke="#9a9a9a" stroke-width="1.2"/><line x1="1749.5" y1="1737" x2="1749.5" y2="1756" stroke="#9a9a9a" stroke-width="1.2"/><line x1="1850.7" y1="1737" x2="1850.7" y2="1756" stroke="#9a9a9a" stroke-width="1.2"/><line x1="1952.0" y1="1737" x2="1952.0" y2="1756" stroke="#9a9a9a" stroke-width="1.2"/><line x1="2053.2" y1="1737" x2="2053.2" y2="1756" stroke="#9a9a9a" stroke-width="1.2"/></svg>
<div class="t" style="left:203.0px;width:1000px;text-align:center;top:865.4px;font-size:22px;font-weight:normal;color:#111;">6</div>
<div class="t" style="left:203.0px;width:1000px;text-align:center;top:946.0px;font-size:22px;font-weight:normal;color:#111;">5</div>
<div class="t" style="left:203.0px;width:1000px;text-align:center;top:1026.1px;font-size:22px;font-weight:normal;color:#111;">4</div>
<div class="t" style="left:203.0px;width:1000px;text-align:center;top:1106.4px;font-size:22px;font-weight:normal;color:#111;">3</div>
<div class="t" style="left:203.0px;width:1000px;text-align:center;top:1186.4px;font-size:22px;font-weight:normal;color:#111;">2</div>
<div class="t" style="left:203.0px;width:1000px;text-align:center;top:1265.0px;font-size:22px;font-weight:normal;color:#111;">1</div>
<div class="t" style="left:203.0px;width:1000px;text-align:center;top:1345.0px;font-size:22px;font-weight:normal;color:#111;">0</div>
<div class="t" style="left:0.0px;top:-23.3px;font-size:27.5px;font-weight:normal;color:#111;left:661px;top:1116.5px;transform:translate(-50%,-50%) rotate(-90deg);">Number of To-Do’s</div>
<div class="t" style="left:326.0px;width:1000px;text-align:center;top:1462.1px;font-size:24px;font-weight:normal;color:#111;">Jul 24</div>
<div class="t" style="left:428.2px;width:1000px;text-align:center;top:1462.1px;font-size:24px;font-weight:normal;color:#111;">Jul 25</div>
<div class="t" style="left:530.4px;width:1000px;text-align:center;top:1462.1px;font-size:24px;font-weight:normal;color:#111;">Jul 26</div>
<div class="t" style="left:632.6px;width:1000px;text-align:center;top:1462.1px;font-size:24px;font-weight:normal;color:#111;">Jul 27</div>
<div class="t" style="left:734.8px;width:1000px;text-align:center;top:1462.1px;font-size:24px;font-weight:normal;color:#111;">Jul 28</div>
<div class="t" style="left:837.0px;width:1000px;text-align:center;top:1462.1px;font-size:24px;font-weight:normal;color:#111;">Jul 29</div>
<div class="t" style="left:939.2px;width:1000px;text-align:center;top:1462.1px;font-size:24px;font-weight:normal;color:#111;">Jul 30</div>
<div class="t" style="left:1041.4px;width:1000px;text-align:center;top:1462.1px;font-size:24px;font-weight:normal;color:#111;">Jul 31</div>
<div class="t" style="left:1143.6px;width:1000px;text-align:center;top:1462.1px;font-size:24px;font-weight:normal;color:#111;">Aug 1</div>
<div class="t" style="left:1245.8px;width:1000px;text-align:center;top:1462.1px;font-size:24px;font-weight:normal;color:#111;">Aug 2</div>
<div class="t" style="left:1348.0px;width:1000px;text-align:center;top:1462.1px;font-size:24px;font-weight:normal;color:#111;">Aug 3</div>
<div class="t" style="left:1450.2px;width:1000px;text-align:center;top:1462.1px;font-size:24px;font-weight:normal;color:#111;">Aug 4</div>
<div class="t" style="left:1552.4px;width:1000px;text-align:center;top:1462.1px;font-size:24px;font-weight:normal;color:#111;">Aug 5</div>
<div class="a" style="left:1225px;top:1534px;width:89px;height:44px;background:#6b8551;"></div>
<div class="t" style="left:1322.5px;top:1544.0px;font-size:26px;font-weight:normal;color:#6b8551;-webkit-text-stroke:0.94px #6b8551;">Ideal</div>
<div class="a" style="left:1406px;top:1534px;width:89px;height:44px;background:#9c1727;"></div>
<div class="t" style="left:1503.5px;top:1546.6px;font-size:27px;font-weight:normal;color:#9c1727;-webkit-text-stroke:0.97px #9c1727;">Actual</div>
<div class="t" style="left:646.0px;top:1636.5px;font-size:36px;font-weight:normal;color:#111;-webkit-text-stroke:1.30px #111;">Cumulative Flow</div>
<div class="t" style="left:190.0px;width:1000px;text-align:center;top:1725.7px;font-size:24px;font-weight:normal;color:#111;">500</div>
<div class="t" style="left:2256.0px;top:334.5px;font-size:36px;font-weight:normal;color:#111;-webkit-text-stroke:1.30px #111;">Project Progress</div>
<svg style="left:2340px;top:390px" width="620" height="620" viewBox="2340 390 620 620"><path d="M2646.0,414.5 A285,285 0 1 1 2415.4,532.0 L2524.6,611.3 A150,150 0 1 0 2646.0,549.5 Z" fill="#6b8551" stroke="#fff" stroke-width="5" stroke-linejoin="miter"/><path d="M2415.4,532.0 A285,285 0 0 1 2646.0,414.5 L2646.0,549.5 A150,150 0 0 0 2524.6,611.3 Z" fill="#555" stroke="#fff" stroke-width="5" stroke-linejoin="miter"/></svg>
<div class="a" style="left:2385px;top:1003px;width:116px;height:36px;background:#6b8551;border:3px solid #fff;"></div>
<div class="t" style="left:2516.0px;top:1012.3px;font-size:25px;font-weight:normal;color:#555;-webkit-text-stroke:0.90px #555;">85% Done</div>
<div class="a" style="left:2659px;top:1003px;width:116px;height:36px;background:#555;border:3px solid #fff;"></div>
<div class="t" style="left:2790.0px;top:1012.3px;font-size:25px;font-weight:normal;color:#555;-webkit-text-stroke:0.90px #555;">15% Open</div>
<div class="t" style="left:2257.0px;top:1108.2px;font-size:36px;font-weight:normal;color:#111;letter-spacing:0.3px;-webkit-text-stroke:1.30px #111;">Milestones</div>
<div class="a" style="left:622px;top:298px;width:2440px;height:1458px;overflow:hidden;border-radius:16px 8px 8px 16px;">
<div class="a" style="left:1638px;top:868px;width:774px;height:178px;background:#fefefd;border-radius:22px;box-shadow:0 0 9px rgba(0,0,0,0.13);"></div>
<div class="t" style="left:1668.0px;top:890.9px;font-size:32px;font-weight:normal;color:#6b8551;-webkit-text-stroke:1.15px #6b8551;text-decoration:underline;text-decoration-thickness:2px;text-underline-offset:4px;">Install Rain Cover &amp; Shade Structure</div>
<div class="t" style="left:1668.0px;top:944.8px;font-size:28px;font-weight:normal;color:#444;">Due by: 02/29/2024</div>
<div class="t" style="left:1385.0px;width:1000px;text-align:right;top:944.8px;font-size:28px;font-weight:normal;color:#444;">95% Complete</div>
<div class="a" style="left:1666px;top:996px;width:718px;height:24px;border-radius:12px;background:#fff;box-shadow:inset 0 1px 3px rgba(0,0,0,0.18);overflow:hidden;"><div class="a" style="left:0;top:0;width:658px;height:24px;background:linear-gradient(90deg,#ecb64c,#6b8551);border-radius:12px 0 0 12px;"></div></div>
<div class="a" style="left:1632px;top:1074px;width:774px;height:178px;background:#fefefd;border-radius:22px;box-shadow:0 0 9px rgba(0,0,0,0.13);"></div>
<div class="t" style="left:1662.0px;top:1096.9px;font-size:32px;font-weight:normal;color:#6b8551;-webkit-text-stroke:1.15px #6b8551;text-decoration:underline;text-decoration-thickness:2px;text-underline-offset:4px;">Replace lost beeswax</div>
<div class="t" style="left:1662.0px;top:1150.8px;font-size:28px;font-weight:normal;color:#444;">Due by: 06/29/2024</div>
<div class="t" style="left:1379.0px;width:1000px;text-align:right;top:1150.8px;font-size:28px;font-weight:normal;color:#444;">70% Complete</div>
<div class="a" style="left:1660px;top:1202px;width:718px;height:24px;border-radius:12px;background:#fff;box-shadow:inset 0 1px 3px rgba(0,0,0,0.18);overflow:hidden;"><div class="a" style="left:0;top:0;width:406px;height:24px;background:linear-gradient(90deg,#ecb64c,#6b8551);border-radius:12px 0 0 12px;"></div></div>
<div class="a" style="left:1632px;top:1280px;width:774px;height:178px;background:#fefefd;border-radius:22px;box-shadow:0 0 9px rgba(0,0,0,0.13);"></div>
<div class="t" style="left:1662.0px;top:1302.9px;font-size:32px;font-weight:normal;color:#6b8551;-webkit-text-stroke:1.15px #6b8551;text-decoration:underline;text-decoration-thickness:2px;text-underline-offset:4px;">Install Entrance Blocks for Winter</div>
<div class="t" style="left:1662.0px;top:1356.8px;font-size:28px;font-weight:normal;color:#444;">Due by: 12/29/2024</div>
<div class="t" style="left:1379.0px;width:1000px;text-align:right;top:1356.8px;font-size:28px;font-weight:normal;color:#444;">10% Complete</div>
<div class="a" style="left:1660px;top:1408px;width:718px;height:24px;border-radius:12px;background:#fff;box-shadow:inset 0 1px 3px rgba(0,0,0,0.18);overflow:hidden;"><div class="a" style="left:0;top:0;width:88px;height:24px;background:linear-gradient(90deg,#ecb64c,#6b8551);border-radius:12px 0 0 12px;"></div></div>
</div>
<div class="a" style="left:2782px;top:1804px;width:2px;height:6px;background:#666;"></div>
<div class="a" style="left:2932px;top:1805px;width:6px;height:5px;background:#555;"></div>
<div class="a" style="left:2910px;top:1808px;width:5px;height:2px;background:#555;"></div></body></html>
